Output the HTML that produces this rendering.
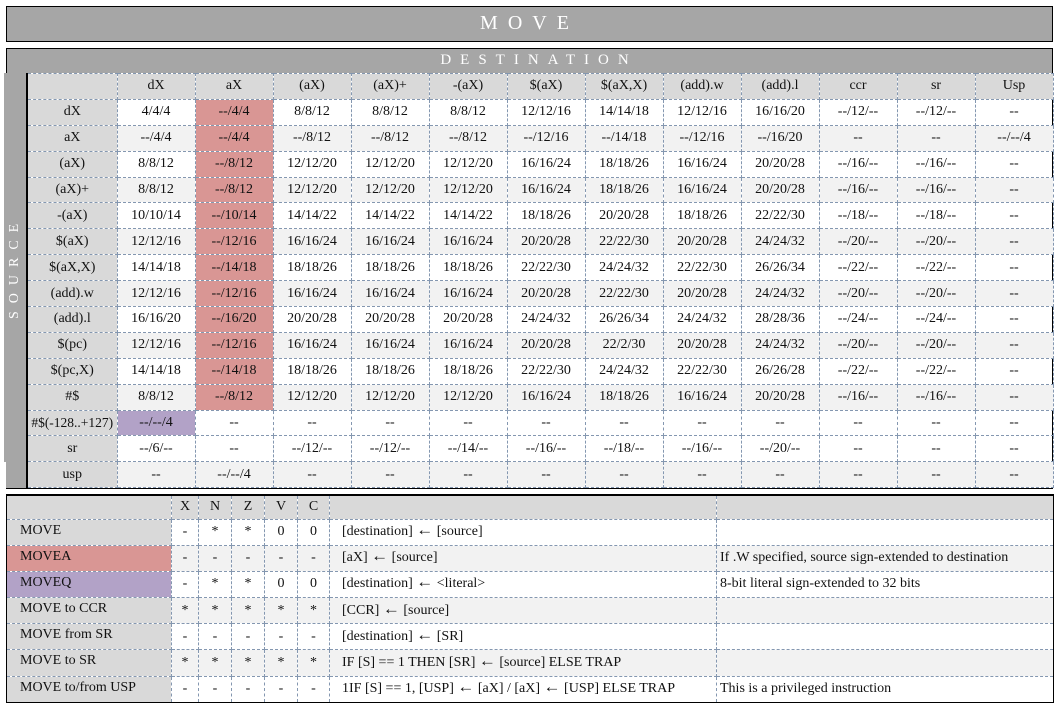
<!DOCTYPE html>
<html><head><meta charset="utf-8"><style>
*{margin:0;padding:0;box-sizing:border-box}
body{width:1057px;height:708px;background:#fff;position:relative;overflow:hidden;font-family:"Liberation Serif",serif;font-size:14px;color:#111}
.abs{position:absolute}
.title{left:6px;top:6px;width:1047px;height:36px;background:#a6a6a6;border:1px solid #000;color:#fff;text-align:center;font-size:20px;letter-spacing:10px;line-height:33px}
.box{left:6px;top:48px;width:1047px;height:441px;border:1px solid #000;border-top:2px solid #000}
.dest{left:26px;top:49px;width:1026px;height:24px;background:#a6a6a6;color:#fff;text-align:center;font-size:15px;letter-spacing:9px;line-height:22px}
.destl{left:7px;top:49px;width:19px;height:24px;background:#a6a6a6}
.src{left:4px;top:73px;width:22px;height:389px;background:#a6a6a6}
.srct{left:4px;top:73px;width:22px;height:389px;color:#fff;writing-mode:vertical-rl;transform:rotate(180deg);text-align:center;letter-spacing:8px;font-size:14px;line-height:22px}
.srcl{left:6px;top:462px;width:20px;height:26px;background:#a6a6a6}
table{border-collapse:collapse;table-layout:fixed;position:absolute}
td{border:1px dashed #8497b0;text-align:center;white-space:nowrap;overflow:hidden}
#m{left:26px;top:73px;width:1026px;border-left:2px solid #000}
#m tr{height:25.9px}
#m tr:first-child td{background:#d9d9d9}
#m td:first-child{background:#d9d9d9}
.g td{background:#f2f2f2}
.r{background:#d99694!important}
.p{background:#b2a2c7!important}
#b{left:6px;top:494px;width:1047px;border:1px solid #000;border-top:2px solid #000}
#b tr{height:26.2px}
#b tr:first-child{height:24px}
#b tr:first-child td{background:#d9d9d9}
#b td:first-child{background:#d9d9d9;text-align:left;padding-left:13px;vertical-align:top;padding-top:3px}
#b td.l{text-align:left;padding-left:12px}
#b td.n{text-align:left;padding-left:3px}
.a{font-size:17px;line-height:10px}
</style></head><body>
<div class="abs title">MOVE</div>
<div class="abs box"></div>
<div class="abs destl"></div>
<div class="abs dest">DESTINATION</div>
<div class="abs src"></div>
<div class="abs srct">SOURCE</div>
<table id="m">
<colgroup><col style="width:90px"><col span="12" style="width:78px"></colgroup>
<tr><td></td><td>dX</td><td>aX</td><td>(aX)</td><td>(aX)+</td><td>-(aX)</td><td>$(aX)</td><td>$(aX,X)</td><td>(add).w</td><td>(add).l</td><td>ccr</td><td>sr</td><td>Usp</td></tr>
<tr><td>dX</td><td>4/4/4</td><td class="r">--/4/4</td><td>8/8/12</td><td>8/8/12</td><td>8/8/12</td><td>12/12/16</td><td>14/14/18</td><td>12/12/16</td><td>16/16/20</td><td>--/12/--</td><td>--/12/--</td><td>--</td></tr>
<tr class="g"><td>aX</td><td>--/4/4</td><td class="r">--/4/4</td><td>--/8/12</td><td>--/8/12</td><td>--/8/12</td><td>--/12/16</td><td>--/14/18</td><td>--/12/16</td><td>--/16/20</td><td>--</td><td>--</td><td>--/--/4</td></tr>
<tr><td>(aX)</td><td>8/8/12</td><td class="r">--/8/12</td><td>12/12/20</td><td>12/12/20</td><td>12/12/20</td><td>16/16/24</td><td>18/18/26</td><td>16/16/24</td><td>20/20/28</td><td>--/16/--</td><td>--/16/--</td><td>--</td></tr>
<tr class="g"><td>(aX)+</td><td>8/8/12</td><td class="r">--/8/12</td><td>12/12/20</td><td>12/12/20</td><td>12/12/20</td><td>16/16/24</td><td>18/18/26</td><td>16/16/24</td><td>20/20/28</td><td>--/16/--</td><td>--/16/--</td><td>--</td></tr>
<tr><td>-(aX)</td><td>10/10/14</td><td class="r">--/10/14</td><td>14/14/22</td><td>14/14/22</td><td>14/14/22</td><td>18/18/26</td><td>20/20/28</td><td>18/18/26</td><td>22/22/30</td><td>--/18/--</td><td>--/18/--</td><td>--</td></tr>
<tr class="g"><td>$(aX)</td><td>12/12/16</td><td class="r">--/12/16</td><td>16/16/24</td><td>16/16/24</td><td>16/16/24</td><td>20/20/28</td><td>22/22/30</td><td>20/20/28</td><td>24/24/32</td><td>--/20/--</td><td>--/20/--</td><td>--</td></tr>
<tr><td>$(aX,X)</td><td>14/14/18</td><td class="r">--/14/18</td><td>18/18/26</td><td>18/18/26</td><td>18/18/26</td><td>22/22/30</td><td>24/24/32</td><td>22/22/30</td><td>26/26/34</td><td>--/22/--</td><td>--/22/--</td><td>--</td></tr>
<tr class="g"><td>(add).w</td><td>12/12/16</td><td class="r">--/12/16</td><td>16/16/24</td><td>16/16/24</td><td>16/16/24</td><td>20/20/28</td><td>22/22/30</td><td>20/20/28</td><td>24/24/32</td><td>--/20/--</td><td>--/20/--</td><td>--</td></tr>
<tr><td>(add).l</td><td>16/16/20</td><td class="r">--/16/20</td><td>20/20/28</td><td>20/20/28</td><td>20/20/28</td><td>24/24/32</td><td>26/26/34</td><td>24/24/32</td><td>28/28/36</td><td>--/24/--</td><td>--/24/--</td><td>--</td></tr>
<tr class="g"><td>$(pc)</td><td>12/12/16</td><td class="r">--/12/16</td><td>16/16/24</td><td>16/16/24</td><td>16/16/24</td><td>20/20/28</td><td>22/2/30</td><td>20/20/28</td><td>24/24/32</td><td>--/20/--</td><td>--/20/--</td><td>--</td></tr>
<tr><td>$(pc,X)</td><td>14/14/18</td><td class="r">--/14/18</td><td>18/18/26</td><td>18/18/26</td><td>18/18/26</td><td>22/22/30</td><td>24/24/32</td><td>22/22/30</td><td>26/26/28</td><td>--/22/--</td><td>--/22/--</td><td>--</td></tr>
<tr class="g"><td>#$</td><td>8/8/12</td><td class="r">--/8/12</td><td>12/12/20</td><td>12/12/20</td><td>12/12/20</td><td>16/16/24</td><td>18/18/26</td><td>16/16/24</td><td>20/20/28</td><td>--/16/--</td><td>--/16/--</td><td>--</td></tr>
<tr><td style="font-size:13.5px">#$(-128..+127)</td><td class="p">--/--/4</td><td>--</td><td>--</td><td>--</td><td>--</td><td>--</td><td>--</td><td>--</td><td>--</td><td>--</td><td>--</td><td>--</td></tr>
<tr><td>sr</td><td>--/6/--</td><td>--</td><td>--/12/--</td><td>--/12/--</td><td>--/14/--</td><td>--/16/--</td><td>--/18/--</td><td>--/16/--</td><td>--/20/--</td><td>--</td><td>--</td><td>--</td></tr>
<tr class="g"><td>usp</td><td>--</td><td>--/--/4</td><td>--</td><td>--</td><td>--</td><td>--</td><td>--</td><td>--</td><td>--</td><td>--</td><td>--</td><td>--</td></tr>
</table>
<div class="abs srcl"></div>
<table id="b">
<colgroup><col style="width:165px"><col style="width:27px"><col style="width:33px"><col style="width:33px"><col style="width:33px"><col style="width:32px"><col style="width:387px"><col style="width:337px"></colgroup>
<tr><td></td><td>X</td><td>N</td><td>Z</td><td>V</td><td>C</td><td></td><td></td></tr>
<tr><td>MOVE</td><td>-</td><td>*</td><td>*</td><td>0</td><td>0</td><td class="l">[destination] <span class="a">←</span> [source]</td><td class="n"></td></tr>
<tr class="g"><td class="r">MOVEA</td><td>-</td><td>-</td><td>-</td><td>-</td><td>-</td><td class="l">[aX] <span class="a">←</span> [source]</td><td class="n">If .W specified, source sign-extended to destination</td></tr>
<tr><td class="p">MOVEQ</td><td>-</td><td>*</td><td>*</td><td>0</td><td>0</td><td class="l">[destination] <span class="a">←</span> &lt;literal&gt;</td><td class="n">8-bit literal sign-extended to 32 bits</td></tr>
<tr class="g"><td>MOVE to CCR</td><td>*</td><td>*</td><td>*</td><td>*</td><td>*</td><td class="l">[CCR] <span class="a">←</span> [source]</td><td class="n"></td></tr>
<tr><td>MOVE from SR</td><td>-</td><td>-</td><td>-</td><td>-</td><td>-</td><td class="l">[destination] <span class="a">←</span> [SR]</td><td class="n"></td></tr>
<tr class="g"><td>MOVE to SR</td><td>*</td><td>*</td><td>*</td><td>*</td><td>*</td><td class="l">IF [S] == 1 THEN [SR] <span class="a">←</span> [source] ELSE TRAP</td><td class="n"></td></tr>
<tr><td>MOVE to/from USP</td><td>-</td><td>-</td><td>-</td><td>-</td><td>-</td><td class="l">1IF [S] == 1, [USP] <span class="a">←</span> [aX] / [aX] <span class="a">←</span> [USP] ELSE TRAP</td><td class="n">This is a privileged instruction</td></tr>
</table>
</body></html>
